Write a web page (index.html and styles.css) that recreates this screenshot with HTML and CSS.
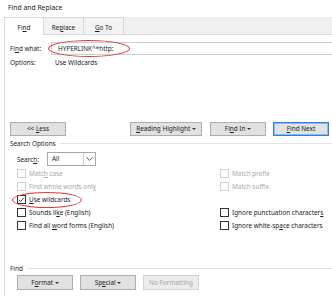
FILE: index.html
```html
<!DOCTYPE html>
<html lang="en">
<head>
  <meta charset="UTF-8" />
  <title>Find and Replace</title>
  <link rel="stylesheet" href="styles.css">
</head>
<body>

<!-- Dialog title -->
<div class="title">Find and Replace</div>

<!-- Tab strip -->
<div class="tabs">
  <div class="tab active">Fi<u>n</u>d</div>
  <div class="tab">Re<u>p</u>lace</div>
  <div class="tab"><u>G</u>o To</div>
</div>

<div class="panel">

  <!-- Find what -->
  <div class="find-row">
    <span class="label">Fi<u>n</u>d what:</span>
    <div class="text-box">HYPERLINK^*http:</div>
  </div>
  <div class="options-row">
    <span class="label">Options:</span>
    <span>Use Wildcards</span>
  </div>

  <!-- Main buttons -->
  <div class="button-row">
    <button class="btn">&lt;&lt; <u>L</u>ess</button>
    <button class="btn wide push"><u>R</u>eading Highlight <span class="caret"></span></button>
    <button class="btn">Fi<u>n</u>d In <span class="caret"></span></button>
    <button class="btn default"><u>F</u>ind Next</button>
  </div>

  <!-- Search options -->
  <div class="group-title"><span>Search Options</span></div>

  <div class="search-row">
    <span>Searc<u>h</u>:</span>
    <div class="select">
      <span class="select-text">All</span>
      <span class="select-arrow">
        <svg width="7" height="4" viewBox="0 0 7 4"><path d="M0.5 0.5 L3.5 3.3 L6.5 0.5" fill="none" stroke="#555" stroke-width="1"/></svg>
      </span>
    </div>
  </div>

  <div class="checks">
    <div class="check disabled"><span class="box"></span><span>Matc<u>h</u> case</span></div>
    <div class="check disabled"><span class="box"></span><span>Find whole words onl<u>y</u></span></div>
    <div class="check"><span class="box">
      <svg width="8" height="8" viewBox="0 0 8 8"><path d="M1 3.8 L3 5.8 L6.8 1.4" fill="none" stroke="#222" stroke-width="1"/></svg>
    </span><span><u>U</u>se wildcards</span></div>
    <div class="check"><span class="box"></span><span>Sounds li<u>k</u>e (English)</span></div>
    <div class="check"><span class="box"></span><span>Find all <u>w</u>ord forms (English)</span></div>

    <div class="check disabled right r1"><span class="box"></span><span>Match prefix</span></div>
    <div class="check disabled right r2"><span class="box"></span><span>Match suffix</span></div>
    <div class="check right r4"><span class="box"></span><span>Ignore punctuation character<u>s</u></span></div>
    <div class="check right r5"><span class="box"></span><span>Ignore white-sp<u>a</u>ce characters</span></div>
  </div>

  <!-- Find formatting -->
  <div class="group-title find-title"><span>Find</span></div>
  <div class="format-row">
    <button class="btn">F<u>o</u>rmat <span class="caret"></span></button>
    <button class="btn">Sp<u>e</u>cial <span class="caret"></span></button>
    <button class="btn" disabled>No Formatting</button>
  </div>
</div>

<!-- Annotation ellipses -->
<div class="mark mark-find"></div>
<div class="mark mark-wild"></div>

</body>
</html>
```

FILE: styles.css
```css
/* =========================
   General Page Styling
   ========================= */
body {
  font-family: "Noto Sans", "Open Sans", sans-serif;
  font-size: 6.4px;
  color: #1a1a1a;
  background-color: #fff;
  margin: 0;
  padding: 0;
  width: 332px;
  height: 296px;
  overflow: hidden;
  position: relative;
}

u {
  text-decoration-thickness: 1px;
  text-underline-offset: 1px;
}

.title {
  height: 17px;
  line-height: 16px;
  padding-left: 8px;
  font-size: 6.8px;
}

/* =========================
   Tabs
   ========================= */
.tabs {
  display: flex;
  margin-left: 4px;
  height: 18px;
  background-color: #efefef;
  border-bottom: 1px solid #dadada;
  box-sizing: border-box;
}

.tab {
  width: 40px;
  box-sizing: border-box;
  border: 1px solid #d9d9d9;
  border-left: none;
  border-bottom: none;
  text-align: center;
  line-height: 19px;
  background-color: #f3f3f3;
}

.tab.active {
  background-color: #fff;
  border-left: 1px solid #d9d9d9;
  height: 18px;
}

/* =========================
   Panel
   ========================= */
.panel {
  margin-left: 4px;
  border-left: 1px solid #dadada;
  height: 261px;
  padding-left: 5px;
}

.find-row {
  display: flex;
  align-items: center;
  padding-top: 7px;
  height: 13px;
}

.label {
  width: 41px;
  flex-shrink: 0;
}

.text-box {
  flex: 1;
  height: 13px;
  line-height: 12px;
  box-sizing: border-box;
  border: 1px solid #cfcfcf;
  border-right: none;
  padding-left: 6px;
}

.options-row {
  display: flex;
  height: 10px;
  line-height: 10px;
  margin-top: 3px;
}

.options-row .label {
  width: 45px;
}

/* =========================
   Buttons
   ========================= */
.button-row {
  display: flex;
  margin-top: 54px;
  padding-right: 3px;
  gap: 7px;
}

.btn {
  font-family: inherit;
  font-size: 6.4px;
  color: #1a1a1a;
  width: 56px;
  height: 14px;
  padding: 0;
  background-color: #e1e1e1;
  border: 1px solid #adadad;
  line-height: 12px;
}

.btn.wide {
  width: 72px;
}

.btn.push {
  margin-left: auto;
  margin-right: 1px;
}

.btn.default {
  border-color: #2b7fd6;
  box-shadow: inset 0 0 0 1px #8dbcec;
}

.btn:disabled {
  color: #a6a6a6;
  background-color: #ececec;
  border-color: #d3d3d3;
}

.caret {
  display: inline-block;
  width: 0;
  height: 0;
  border-left: 2px solid transparent;
  border-right: 2px solid transparent;
  border-top: 2px solid #333;
  vertical-align: 1px;
}

/* =========================
   Group headings
   ========================= */
.group-title {
  display: flex;
  align-items: center;
  gap: 4px;
  height: 10px;
  margin-top: 2px;
}

.group-title::after {
  content: "";
  flex: 1;
  border-top: 1px solid #e3e3e3;
}

.find-title {
  margin-top: 31px;
}

/* =========================
   Search options
   ========================= */
.search-row {
  display: flex;
  align-items: center;
  gap: 8px;
  margin-top: 4px;
  padding-left: 7px;
  height: 14px;
}

.select {
  display: flex;
  width: 49px;
  height: 14px;
  box-sizing: border-box;
  border: 1px solid #a8a8a8;
}

.select-text {
  flex: 1;
  padding-left: 4px;
  line-height: 12px;
}

.select-arrow {
  width: 11px;
  border-left: 1px solid #d0d0d0;
  display: flex;
  align-items: center;
  justify-content: center;
}

.checks {
  display: grid;
  grid-template-columns: 203px 1fr;
  grid-template-rows: repeat(5, 13px);
  grid-auto-flow: column;
  margin-top: 1px;
  padding-left: 7px;
}

.check {
  display: flex;
  align-items: center;
  gap: 3px;
  grid-column: 1;
  white-space: nowrap;
}

.check.right { grid-column: 2; }
.check.r1 { grid-row: 1; }
.check.r2 { grid-row: 2; }
.check.r4 { grid-row: 4; }
.check.r5 { grid-row: 5; }

.box {
  width: 9px;
  height: 9px;
  box-sizing: border-box;
  border: 1px solid #333;
  display: flex;
  align-items: center;
  justify-content: center;
  flex-shrink: 0;
}

.check.disabled {
  color: #a8a8a8;
}

.check.disabled .box {
  border-color: #cfcfcf;
}

.format-row {
  display: flex;
  gap: 7px;
  margin-top: 2px;
  padding-left: 7px;
}

.format-row .btn {
  height: 15px;
}

/* =========================
   Annotation ellipses
   ========================= */
.mark {
  position: absolute;
  border: 1.5px solid #e0393b;
  border-radius: 50%;
}

.mark-find {
  left: 48px;
  top: 40px;
  width: 80px;
  height: 15px;
}

.mark-wild {
  left: 12px;
  top: 192px;
  width: 68px;
  height: 14px;
}
```
